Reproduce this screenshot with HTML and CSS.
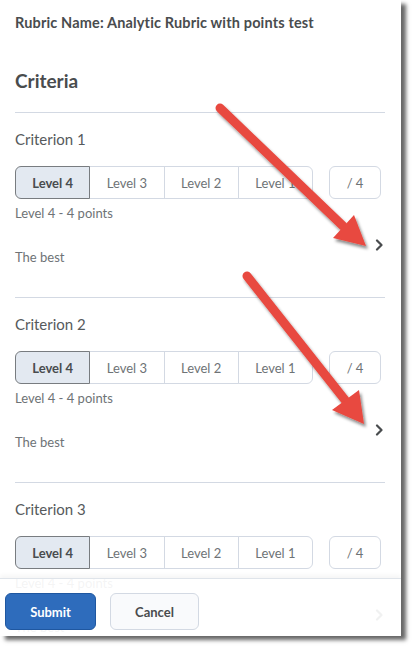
FILE: index.html
```html
<!DOCTYPE html>
<html>
<head>
<meta charset="utf-8">
<link rel="stylesheet" href="styles.css">
</head>
<body>
<div class="panel">
  <div class="content">
    <div class="rubric-name">Rubric Name: Analytic Rubric with points test</div>
    <h2 class="criteria-heading">Criteria</h2>

    <section class="criterion">
      <div class="criterion-title">Criterion 1</div>
      <div class="level-row">
        <div class="levels">
          <button class="level selected">Level 4</button>
          <button class="level">Level 3</button>
          <button class="level">Level 2</button>
          <button class="level">Level 1</button>
        </div>
        <div class="score">/ 4</div>
      </div>
      <div class="feedback">
        <div class="feedback-text">
          <div class="level-points">Level 4 - 4 points</div>
          <div class="desc">The best</div>
        </div>
        <svg class="chevron" width="10" height="12" viewBox="0 0 10 12"><path d="M3 1.5 L7.5 6 L3 10.5" fill="none" stroke="currentColor" stroke-width="2.2" stroke-linecap="round" stroke-linejoin="round"/></svg>
      </div>
    </section>

    <section class="criterion">
      <div class="criterion-title">Criterion 2</div>
      <div class="level-row">
        <div class="levels">
          <button class="level selected">Level 4</button>
          <button class="level">Level 3</button>
          <button class="level">Level 2</button>
          <button class="level">Level 1</button>
        </div>
        <div class="score">/ 4</div>
      </div>
      <div class="feedback">
        <div class="feedback-text">
          <div class="level-points">Level 4 - 4 points</div>
          <div class="desc">The best</div>
        </div>
        <svg class="chevron" width="10" height="12" viewBox="0 0 10 12"><path d="M3 1.5 L7.5 6 L3 10.5" fill="none" stroke="currentColor" stroke-width="2.2" stroke-linecap="round" stroke-linejoin="round"/></svg>
      </div>
    </section>

    <section class="criterion">
      <div class="criterion-title">Criterion 3</div>
      <div class="level-row">
        <div class="levels">
          <button class="level selected">Level 4</button>
          <button class="level">Level 3</button>
          <button class="level">Level 2</button>
          <button class="level">Level 1</button>
        </div>
        <div class="score">/ 4</div>
      </div>
      <div class="feedback">
        <div class="feedback-text">
          <div class="level-points">Level 4 - 4 points</div>
          <div class="desc">The best</div>
        </div>
        <svg class="chevron" width="10" height="12" viewBox="0 0 10 12"><path d="M3 1.5 L7.5 6 L3 10.5" fill="none" stroke="currentColor" stroke-width="2.2" stroke-linecap="round" stroke-linejoin="round"/></svg>
      </div>
    </section>
  </div>

  <div class="footer">
    <button class="btn btn-primary">Submit</button>
    <button class="btn btn-secondary">Cancel</button>
  </div>

  <svg class="arrows" width="401" height="636" viewBox="0 0 401 636">
    <defs>
      <filter id="sh" x="-20%" y="-20%" width="140%" height="140%">
        <feDropShadow dx="2" dy="3" stdDeviation="1.6" flood-color="#000" flood-opacity="0.45"/>
      </filter>
    </defs>
    <g filter="url(#sh)" fill="#e8483f" stroke="#e8483f">
      <line x1="220" y1="108" x2="343" y2="226" stroke-width="9" stroke-linecap="round"/>
      <polygon points="366,246 333,238 354,215" stroke="none"/>
      <line x1="247" y1="276" x2="345" y2="400" stroke-width="9" stroke-linecap="round"/>
      <polygon points="364,424 332,410 359,390" stroke="none"/>
    </g>
  </svg>
</div>
</body>
</html>
```

FILE: styles.css
```css
html, body {
  margin: 0;
  padding: 0;
  background: #ffffff;
}

body {
  font-family: Lato, "Open Sans", "Liberation Sans", sans-serif;
  width: 416px;
  height: 652px;
  overflow: hidden;
}

.panel {
  position: relative;
  width: 401px;
  height: 636px;
  background: #ffffff;
  overflow: hidden;
  box-shadow: 5px 4px 4px rgba(0, 0, 0, 0.6);
}

.content {
  padding: 14px 16px 0 15px;
}

.rubric-name {
  font-size: 14.5px;
  font-weight: 700;
  letter-spacing: 0.15px;
  color: #494c4e;
  line-height: 18px;
}

.criteria-heading {
  margin: 37px 0 0 0;
  font-size: 19px;
  font-weight: 700;
  color: #494c4e;
  line-height: 24px;
  padding-bottom: 19px;
  border-bottom: 1px solid #d3d9e3;
}

.criterion {
  padding-top: 16px;
  height: 168px;
  border-bottom: 1px solid #d3d9e3;
}

.criterion-title {
  font-size: 15px;
  color: #565a5c;
  line-height: 20px;
}

.level-row {
  display: flex;
  margin-top: 17px;
}

.levels {
  display: flex;
  width: 298px;
}

.level {
  flex: 1;
  height: 33px;
  margin: 0 0 0 -1px;
  padding: 0;
  background: #ffffff;
  border: 1px solid #d3d9e3;
  border-radius: 0;
  font-family: inherit;
  font-size: 13px;
  color: #6e7376;
}

.level:first-child {
  margin-left: 0;
  border-radius: 6px 0 0 6px;
}

.level:last-child {
  border-radius: 0 6px 6px 0;
}

.level.selected {
  position: relative;
  z-index: 1;
  background: #e3e9f1;
  border-color: #787c80;
  font-weight: 700;
  color: #494c4e;
}

.score {
  margin-left: 16px;
  width: 52px;
  height: 33px;
  box-sizing: border-box;
  border: 1px solid #d3d9e3;
  border-radius: 6px;
  display: flex;
  align-items: center;
  justify-content: center;
  font-size: 13px;
  color: #6e7376;
}

.feedback {
  display: flex;
  justify-content: space-between;
  align-items: flex-start;
}

.level-points {
  margin-top: 5px;
  font-size: 13px;
  line-height: 18px;
  color: #6e7376;
}

.desc {
  margin-top: 26px;
  font-size: 13px;
  line-height: 18px;
  color: #6e7376;
}

.chevron {
  color: #494c4e;
  margin-top: 40px;
  margin-right: 1px;
}

.footer {
  position: absolute;
  left: 0;
  right: 0;
  bottom: 0;
  height: 58px;
  box-sizing: border-box;
  padding: 14px 0 0 5px;
  display: flex;
  align-items: flex-start;
  gap: 14px;
  background: rgba(255, 255, 255, 0.92);
  border-top: 1px solid #dfe4ea;
  box-shadow: 0 -3px 4px rgba(0, 0, 0, 0.04);
}

.btn {
  height: 37px;
  border-radius: 6px;
  font-family: inherit;
  font-size: 13px;
  font-weight: 700;
  padding: 0;
}

.btn-primary {
  width: 91px;
  background: #2e6cbc;
  border: 1px solid #1f57a0;
  color: #ffffff;
}

.btn-secondary {
  width: 89px;
  background: #f9fafc;
  border: 1px solid #d3d9e3;
  color: #494c4e;
}

.arrows {
  position: absolute;
  left: 0;
  top: 0;
  pointer-events: none;
}
```
